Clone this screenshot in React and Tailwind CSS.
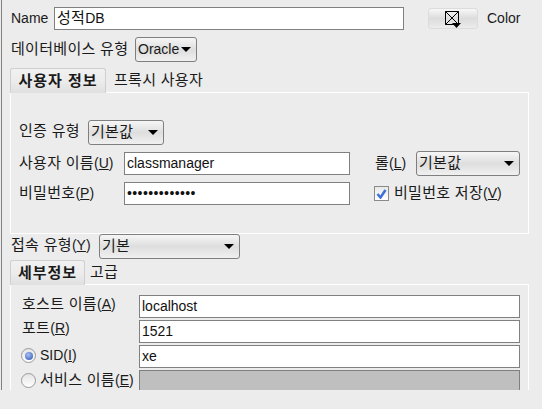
const FONT = '"Liberation Sans", "Noto Sans CJK KR", sans-serif'

// korean runs sit a bit wider than the latin ones in this dialog
function Ko({ children }) {
  return <span className="text-[15px] tracking-[0.3px] whitespace-nowrap">{children}</span>
}

// underline for the mnemonic letter, e.g. 사용자 이름(U)
function Mnemonic({ text, letter, latin = false }) {
  return (
    <span className="whitespace-nowrap text-[14px]">
      {latin ? text : <Ko>{text}</Ko>}(<span className="underline">{letter}</span>)
    </span>
  )
}

function TextBox({ value, className = '', disabled = false }) {
  return (
    <div
      className={`h-[23px] border border-[#808080] pl-[2px] text-[14px] leading-[20px] text-[#111] ${
        disabled ? 'bg-[#bfbfbf]' : 'bg-white'
      } ${className}`}
    >
      {value}
    </div>
  )
}

function Combo({ value, className = '' }) {
  return (
    <div
      className={`flex h-[25px] items-center justify-between rounded-[3px] border border-[#7f7f7f] bg-gradient-to-b from-[#f6f6f6] via-[#dedede] to-[#f0f0f0] pl-[2px] pr-[5px] text-[14px] ${className}`}
    >
      <span>{value}</span>
      <svg width="10" height="5" viewBox="0 0 10 5" className="shrink-0">
        <path d="M0 0h10L5 5z" fill="#000" />
      </svg>
    </div>
  )
}

function Tab({ label, active, className = '' }) {
  if (active) {
    return (
      <div
        className={`z-10 -mb-px flex h-[25px] items-center justify-center rounded-t-[3px] border border-b-0 border-[#cfcfcf] bg-gradient-to-b from-[#f1f1f1] via-[#ececec] to-[#e0e0e0] text-[15px] font-bold tracking-[1px] ${className}`}
      >
        {label}
      </div>
    )
  }
  return (
    <div className={`flex h-[24px] items-center ${className}`}>
      <Ko>{label}</Ko>
    </div>
  )
}

function Radio({ checked }) {
  return (
    <span className="flex h-[15px] w-[15px] shrink-0 items-center justify-center rounded-full border border-[#9a9a9a] bg-gradient-to-b from-[#e4e4e4] to-white">
      {checked && (
        <span className="h-[8px] w-[8px] rounded-full bg-[radial-gradient(circle_at_40%_35%,#a8c0f0,#2a50b8)]" />
      )}
    </span>
  )
}

export default function App() {
  return (
    <div
      className="h-[409px] w-[542px] overflow-hidden bg-[#ececec] text-[#1a1a1a]"
      style={{ fontFamily: FONT }}
    >
      <div className="ml-[1px] h-[390px] overflow-hidden border-l border-[#808080] pl-[8px] pr-[12px] pt-[7px] text-[14px]">
        {/* Name */}
        <div className="flex items-center">
          <span className="w-[44px] pl-[1px]">Name</span>
          <TextBox
            value={
              <>
                <Ko>성적</Ko>DB
              </>
            }
            className="w-[350px]"
          />
          <button className="ml-[24px] flex h-[21px] w-[50px] items-center justify-center rounded-[3px] border border-[#dcdcdc] bg-gradient-to-b from-[#f8f8f8] via-[#dcdcdc] to-[#ececec]">
            <svg width="18" height="18" viewBox="0 0 18 18">
              <path d="M1.5 1.5h13v13h-13zM1.5 1.5l13 13M14.5 1.5l-13 13" fill="none" stroke="#000" />
              <path d="M8 13h9l-4.5 5z" fill="#000" />
            </svg>
          </button>
          <span className="ml-[9px]">Color</span>
        </div>

        {/* DB type */}
        <div className="mt-[7px] flex items-center">
          <span className="w-[125px] pl-[1px]">
            <Ko>데이터베이스 유형</Ko>
          </span>
          <Combo value="Oracle" className="w-[62px]" />
        </div>

        {/* User tabs */}
        <div className="mt-[6px] flex items-end">
          <Tab label="사용자 정보" active className="w-[96px]" />
          <Tab label="프록시 사용자" className="ml-[8px]" />
        </div>
        <div className="h-[142px] w-[519px] border border-white pl-[8px] pt-[27px]">
          <div className="flex h-[25px] items-center">
            <span className="mb-[2px] w-[69px]">
              <Ko>인증 유형</Ko>
            </span>
            <Combo value={<Ko>기본값</Ko>} className="w-[76px]" />
          </div>
          <div className="mt-[6px] flex items-center">
            <span className="w-[105px]">
              <Mnemonic text="사용자 이름" letter="U" />
            </span>
            <TextBox value="classmanager" className="w-[226px]" />
            <span className="ml-[25px] w-[41px]">
              <Mnemonic text="롤" letter="L" />
            </span>
            <Combo value={<Ko>기본값</Ko>} className="w-[104px]" />
          </div>
          <div className="mt-[6px] flex items-center">
            <span className="w-[105px]">
              <Mnemonic text="비밀번호" letter="P" />
            </span>
            <TextBox value="•••••••••••••" className="w-[226px] tracking-[0.4px]" />
            <span className="ml-[24px] flex h-[15px] w-[15px] items-center justify-center border border-[#8a8a8a] bg-gradient-to-b from-[#e8e8e8] to-white">
              <svg width="11" height="10" viewBox="0 0 11 10">
                <path d="M1.5 5l3 3.5 5-7.5" fill="none" stroke="#3f6fd8" strokeWidth="2.5" />
              </svg>
            </span>
            <span className="ml-[5px]">
              <Mnemonic text="비밀번호 저장" letter="V" />
            </span>
          </div>
        </div>

        {/* Connection type */}
        <div className="flex h-[25px] items-center">
          <span className="mb-[2px] w-[89px] pl-[1px]">
            <Mnemonic text="접속 유형" letter="Y" />
          </span>
          <Combo value={<Ko>기본</Ko>} className="w-[141px]" />
        </div>

        {/* Detail tabs */}
        <div className="mt-[1px] flex items-end">
          <Tab label="세부정보" active className="w-[75px]" />
          <Tab label="고급" className="ml-[5px]" />
        </div>
        <div className="h-[120px] w-[519px] border border-white pl-[10px] pr-[8px] pt-[10px]">
          <div className="flex h-[23px] items-center justify-between">
            <span className="mb-[4px] pl-[1px]">
              <Mnemonic text="호스트 이름" letter="A" />
            </span>
            <TextBox value="localhost" className="w-[381px]" />
          </div>
          <div className="mt-[2px] flex h-[23px] items-center justify-between">
            <span className="mb-[6px] pl-[1px]">
              <Mnemonic text="포트" letter="R" />
            </span>
            <TextBox value="1521" className="w-[381px]" />
          </div>
          <div className="mt-[2px] flex h-[23px] items-center justify-between">
            <span className="mb-[2px] flex items-center gap-[4px]">
              <Radio checked />
              <Mnemonic text="SID" letter="I" latin />
            </span>
            <TextBox value="xe" className="w-[381px]" />
          </div>
          <div className="mt-[2px] flex h-[23px] items-center justify-between">
            <span className="mb-[2px] flex items-center gap-[4px]">
              <Radio />
              <Mnemonic text="서비스 이름" letter="E" />
            </span>
            <TextBox disabled className="w-[381px]" />
          </div>
        </div>
      </div>
    </div>
  )
}
